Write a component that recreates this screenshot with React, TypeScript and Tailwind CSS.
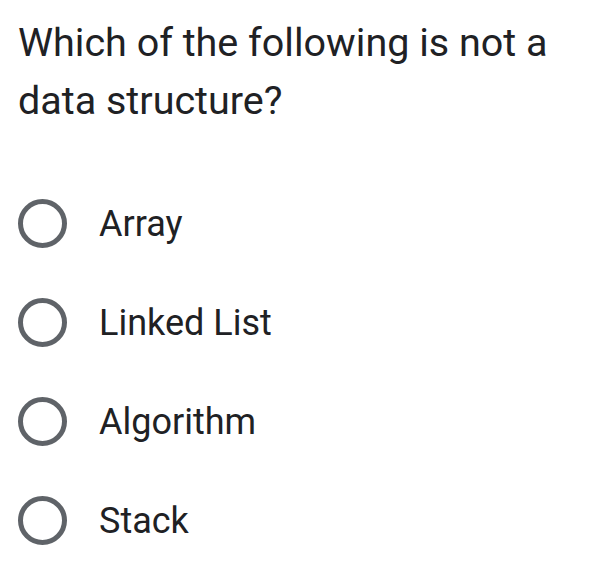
export default function App() {
  const options = ["Array", "Linked List", "Algorithm", "Stack"];
  return (
    <div className="w-[610px] h-[568px] bg-white pl-[18px] pt-[14px] font-['Roboto',sans-serif] text-[#202124]">
      <h1 className="text-[39.5px] leading-[58px] font-normal">
        Which of the following is not a
        <br />
        data structure?
      </h1>
      <div className="mt-[44px] flex flex-col">
        {options.map((o) => (
          <label key={o} className="flex items-center h-[99px]">
            <span className="w-[49px] h-[49px] rounded-full border-[5px] border-[#5f6368] shrink-0" />
            <span className="ml-[32px] text-[36px]">{o}</span>
          </label>
        ))}
      </div>
    </div>
  );
}
